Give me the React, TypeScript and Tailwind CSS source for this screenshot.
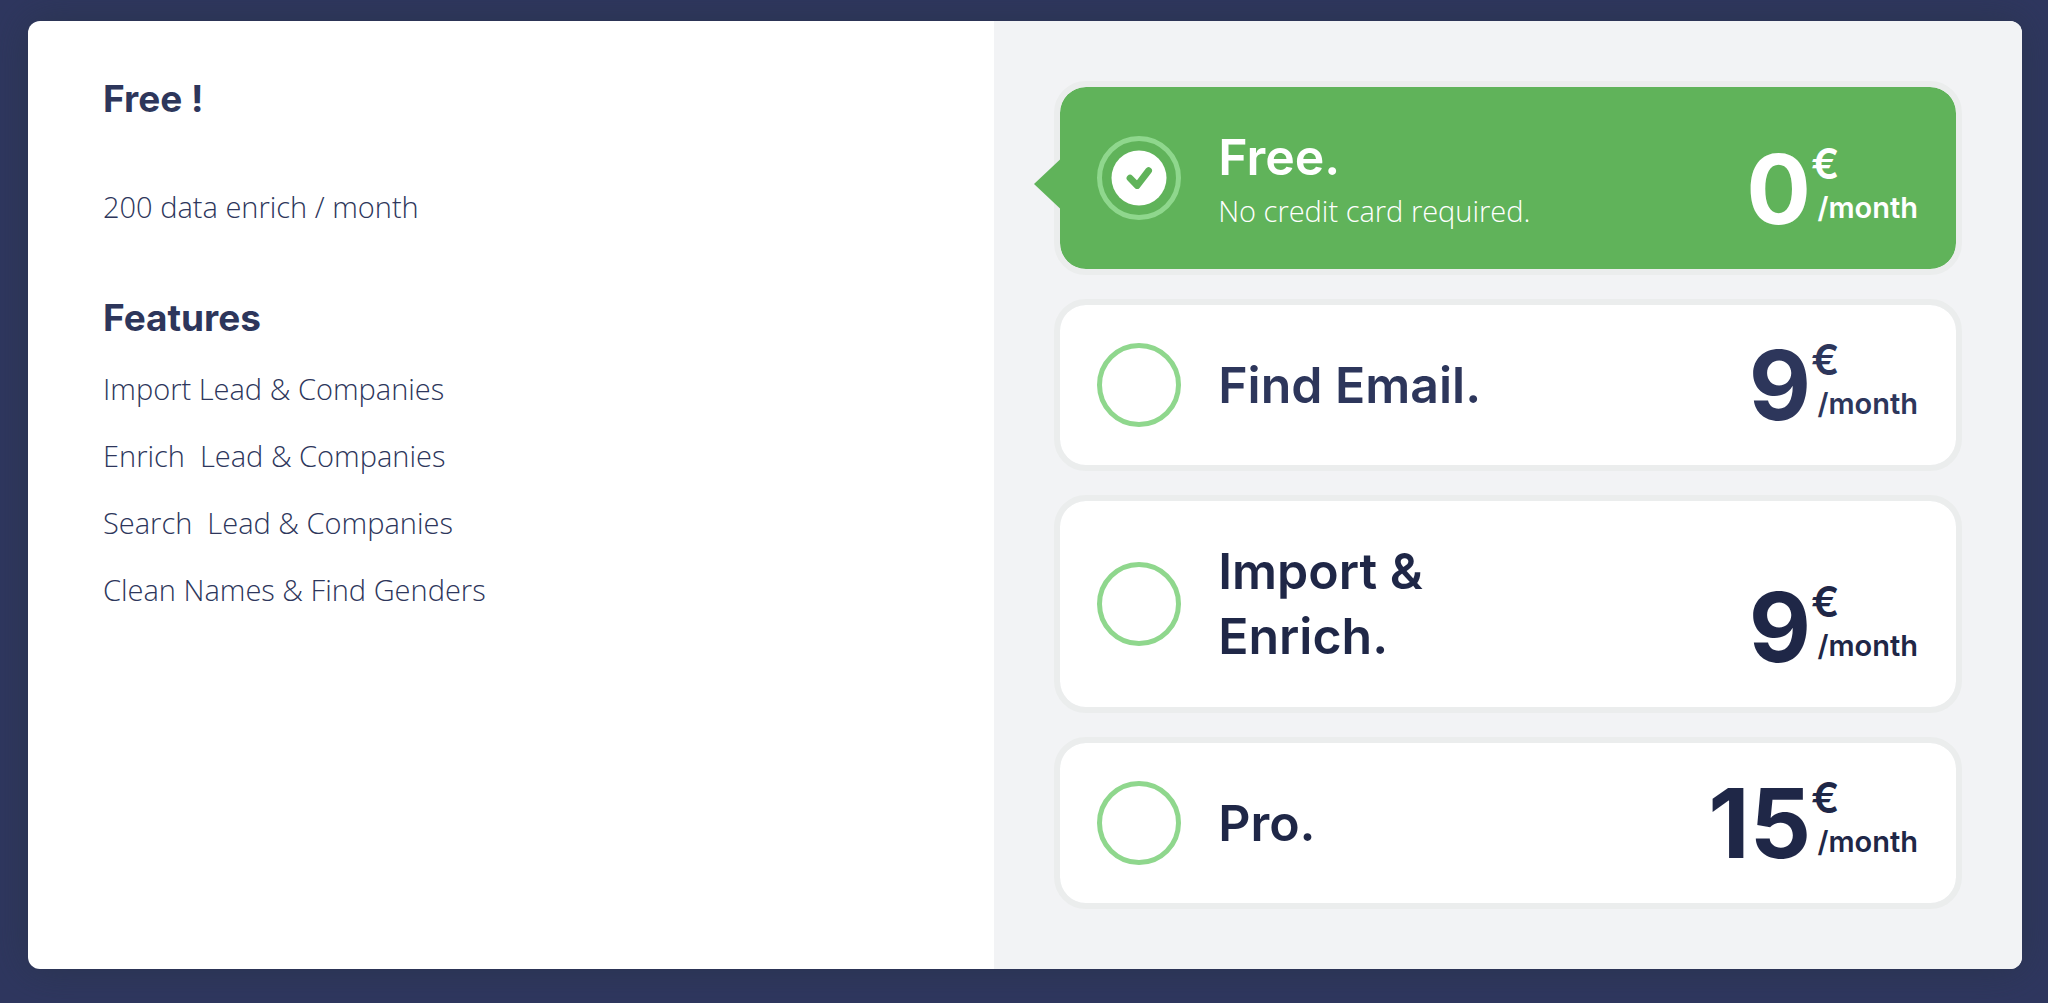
import { useState } from 'react';
import clsx from 'clsx';

type Plan = {
  id: string;
  title: string;
  note?: string;
  price: number;
  tone: string;
};

const plans: Plan[] = [
  { id: 'free', title: 'Free.', note: 'No credit card required.', price: 0, tone: 'text-[#2d365b]' },
  { id: 'find-email', title: 'Find Email.', price: 9, tone: 'text-[#2d365b]' },
  { id: 'import-enrich', title: 'Import & Enrich.', price: 9, tone: 'text-[#1f2747]' },
  { id: 'pro', title: 'Pro.', price: 15, tone: 'text-[#1f2747]' },
];

const features = [
  'Import Lead & Companies',
  'Enrich\u00a0 Lead & Companies',
  'Search\u00a0 Lead & Companies',
  'Clean Names & Find Genders',
];

const light = "font-['Open_Sans',sans-serif] font-light text-[29px]";

function CheckMark() {
  return (
    <svg viewBox="0 0 56 56" className="pointer-events-none absolute size-14" aria-hidden="true">
      <circle cx="28" cy="28" r="27.5" fill="#fff" />
      <path
        d="M19 28.2 L26.2 35.5 L37.6 20.6"
        fill="none"
        stroke="#60b35a"
        strokeWidth="6.8"
        strokeLinecap="round"
        strokeLinejoin="round"
      />
    </svg>
  );
}

function Pointer() {
  return (
    <svg viewBox="0 0 28 50" className="absolute top-[72px] -left-[26px] h-[50px] w-7" aria-hidden="true">
      <path d="M28 0 L26 0.5 L0 25 L26 49.5 L28 50 Z" fill="#60b35a" />
    </svg>
  );
}

function PlanCard({ plan, selected, onSelect }: { plan: Plan; selected: boolean; onSelect: () => void }) {
  return (
    <label
      htmlFor={plan.id}
      className={clsx(
        'relative flex cursor-pointer items-center gap-[37px] rounded-[32px] border-6 border-[#ebeded] bg-clip-padding py-[38px] pr-[38px] pl-[37px]',
        selected ? 'bg-[#60b35a] text-white' : clsx('bg-white', plan.tone),
      )}
    >
      {selected && <Pointer />}
      <span className="relative flex size-[84px] shrink-0 items-center justify-center">
        <input
          id={plan.id}
          type="radio"
          name="plan"
          checked={selected}
          onChange={onSelect}
          className="size-full cursor-pointer appearance-none rounded-full border-5 border-[#8fd78d]"
        />
        {selected && <CheckMark />}
      </span>
      <span className="flex flex-1 flex-col">
        <span className="max-w-[300px] text-[50px] leading-[65px] font-semibold">{plan.title}</span>
        {plan.note && <span className={clsx(light, 'leading-[41px]')}>{plan.note}</span>}
      </span>
      <span className="flex self-end font-semibold">
        <span className="text-[96px] leading-[84px] font-bold">{plan.price}</span>
        <span className="flex min-w-[107px] flex-col justify-between">
          <span className="text-[42px] leading-[33px]">€</span>
          <span className="self-end text-[29px] leading-[46px]">/month</span>
        </span>
      </span>
    </label>
  );
}

export default function App() {
  const [selected, setSelected] = useState('free');

  return (
    <div className="min-h-screen bg-[#2f375f] pt-[21px] pr-[26px] pb-[34px] pl-7 font-['Inter',sans-serif] text-[#2d365b]">
      <main className="grid grid-cols-[47fr_50fr] overflow-hidden rounded-xl bg-white shadow-[0_0_40px_rgba(38,50,66,0.6)]">
        <section className="pt-[54px] pl-[75px]">
          <h2 className="text-[37px] leading-[48px] font-bold">Free !</h2>
          <p className={clsx(light, 'mt-[50px] leading-[67px]')}>200 data enrich / month</p>
          <h2 className="mt-[54px] text-[37px] leading-[48px] font-bold">Features</h2>
          <ul className={clsx(light, 'mt-[13px] leading-[67px]')}>
            {features.map((feature) => (
              <li key={feature}>{feature}</li>
            ))}
          </ul>
        </section>
        <form className="flex flex-col gap-6 bg-[#f2f3f5] p-[60px]" aria-label="Plans">
          {plans.map((plan) => (
            <PlanCard
              key={plan.id}
              plan={plan}
              selected={selected === plan.id}
              onSelect={() => setSelected(plan.id)}
            />
          ))}
        </form>
      </main>
    </div>
  );
}
